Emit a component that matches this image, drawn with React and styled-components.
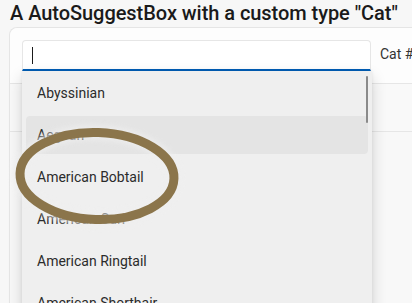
import React from 'react'
import styled, {createGlobalStyle} from 'styled-components'

const GlobalStyle = createGlobalStyle`
    html, body {
        margin: 0;
        padding: 0;
        background: #f7f7f7;
        overflow: hidden;
    }
    * {
        box-sizing: border-box;
    }
`

const Page = styled.div`
    position: relative;
    width: 412px;
    height: 303px;
    overflow: hidden;
    padding-left: 9px;
`

const Heading = styled.h1`
    margin: 0;
    padding-left: 1px;
    height: 27px;
    font-family: Roboto, sans-serif;
    font-size: 20px;
    font-weight: 500;
    letter-spacing: -0.05px;
    line-height: 27px;
    color: #1a1a1a;
    white-space: nowrap;
`

const Card = styled.div`
    width: 420px;
    border: 1px solid #e5e5e5;
    border-right: none;
    border-radius: 8px 0 0 0;
    background: #fbfbfb;
`

const ExampleRow = styled.div`
    display: flex;
    align-items: flex-start;
    height: 55px;
    padding: 12px 0 0 12px;
    background: #fdfdfd;
    border-radius: 8px 0 0 0;
`

const Section = styled.div`
    height: ${props => props.$height}px;
    border-top: 1px solid #e6e6e6;
    background: ${props => props.$bg};
`

const BoxWrap = styled.div`
    position: relative;
    width: 349px;
`

const InputBox = styled.div`
    height: 31px;
    background: #ffffff;
    border: 1px solid #e6e6e6;
    border-bottom: 2px solid #005fb8;
    border-radius: 4px 4px 0 0;
    display: flex;
    align-items: center;
    padding-left: 9px;
`

const Caret = styled.div`
    width: 1px;
    height: 17px;
    background: #1a1a1a;
`

const Output = styled.span`
    margin-left: 9px;
    margin-top: 6px;
    font-family: Roboto, sans-serif;
    font-size: 14px;
    color: #333333;
    white-space: nowrap;
`

const Popup = styled.div`
    position: absolute;
    top: 31px;
    left: 0;
    width: 350px;
    height: 240px;
    overflow: hidden;
    padding-top: 1px;
    background: #efefef;
    box-shadow: 0 6px 14px rgba(0, 0, 0, 0.16), 0 0 3px rgba(0, 0, 0, 0.08);
    z-index: 2;
`

const Item = styled.div`
    height: 38px;
    margin: 2px 4px 4px;
    padding-left: 11px;
    display: flex;
    align-items: center;
    border-radius: 4px;
    font-family: Roboto, sans-serif;
    font-size: 14px;
    color: #2b2b2b;
    background: ${props => props.$active ? '#e4e4e4' : 'transparent'};
`

const ScrollThumb = styled.div`
    position: absolute;
    top: 5px;
    right: 4px;
    width: 2px;
    height: 47px;
    border-radius: 1px;
    background: #8a8a8a;
`

const Annotation = styled.svg`
    position: absolute;
    left: 0;
    top: 0;
    pointer-events: none;
    z-index: 5;
`

const cats = ['Abyssinian', 'Aegean', 'American Bobtail', 'American Curl', 'American Ringtail', 'American Shorthair', 'American Wirehair']

const App = () => {
    return (
        <Page>
            <GlobalStyle />
            <Heading>A AutoSuggestBox with a custom type "Cat"</Heading>
            <Card>
                <ExampleRow>
                    <BoxWrap>
                        <InputBox>
                            <Caret />
                        </InputBox>
                        <Popup>
                            {cats.map((cat, i) => (
                                <Item key={cat} $active={i === 1}>{cat}</Item>
                            ))}
                            <ScrollThumb />
                        </Popup>
                    </BoxWrap>
                    <Output>Cat #</Output>
                </ExampleRow>
                <Section $height={48} $bg="#f9f9f9" />
                <Section $height={200} $bg="#f8f8f8" />
            </Card>
            <Annotation width="412" height="303" viewBox="0 0 412 303">
                <defs>
                    <filter id="halo" x="-20%" y="-30%" width="140%" height="160%">
                        <feGaussianBlur stdDeviation="2.5" />
                    </filter>
                </defs>
                <g transform="rotate(2 97 176)">
                    <ellipse cx="97" cy="176" rx="77" ry="43.5" fill="none" stroke="#efefef" strokeWidth="15" opacity="0.7" filter="url(#halo)" />
                    <ellipse cx="97" cy="176" rx="77" ry="43.5" fill="none" stroke="#8b754b" strokeWidth="9" />
                </g>
            </Annotation>
        </Page>
    )
}

export default App
